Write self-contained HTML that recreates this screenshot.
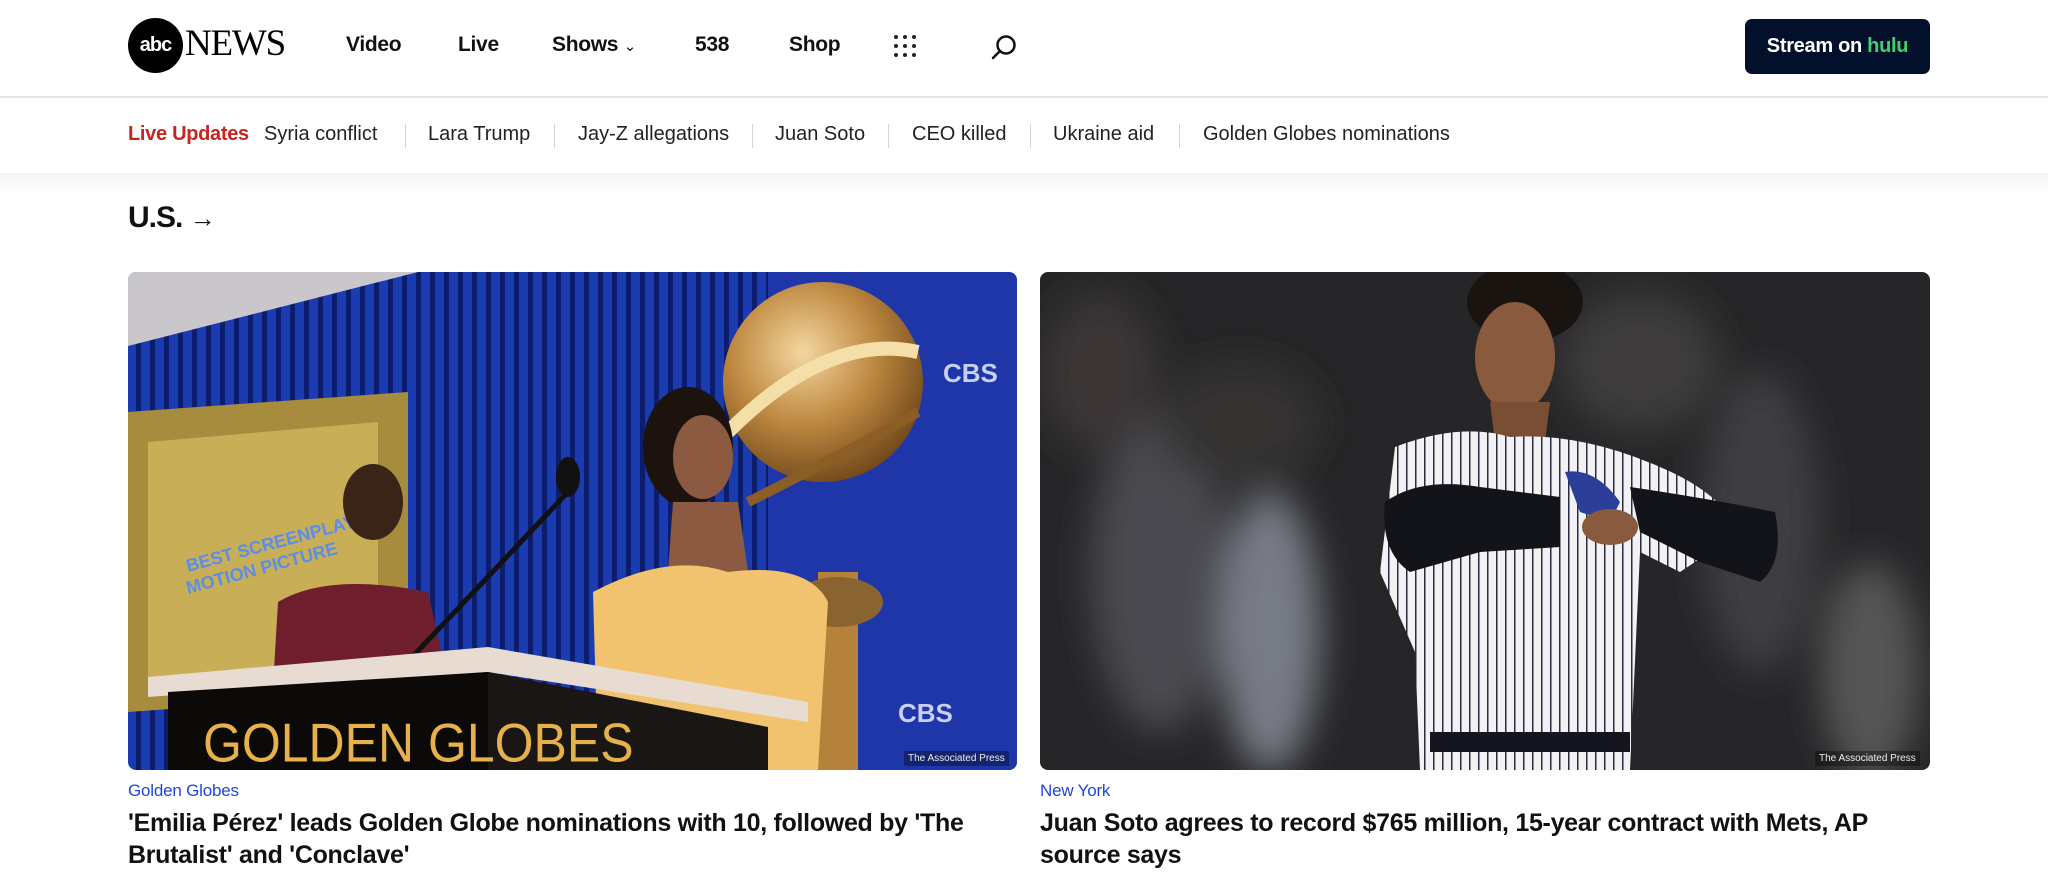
<!DOCTYPE html>
<html><head><meta charset="utf-8"><style>
*{margin:0;padding:0;box-sizing:border-box}
body{width:2048px;height:890px;background:#fff;font-family:"Liberation Sans",Arial,sans-serif;color:#111;position:relative;overflow:hidden}
.a{position:absolute}
.nav{font-weight:700;font-size:21px;top:33px;letter-spacing:-0.3px}
.tr{font-size:20px;top:123px;color:#222;letter-spacing:0}
.sep{top:124px;width:1px;height:24px;background:#d6d6d6}
.cat{font-size:17px;color:#1f45e0;top:781px;letter-spacing:-0.2px}
.hl{font-size:25px;font-weight:700;top:807px;line-height:32px;letter-spacing:-0.3px;width:900px}
.ap{font-size:10px;color:#eee;background:rgba(0,0,0,.35);padding:2px 4px}
</style></head><body>
<div class="a" style="left:128px;top:18px;width:55px;height:55px;border-radius:50%;background:#000;color:#fff;font-weight:700;font-size:20px;line-height:55px;text-align:center;letter-spacing:-1px">abc</div>
<div class="a" style="left:185px;top:22px;font-family:'Liberation Serif',serif;font-size:37px;letter-spacing:-1.2px;color:#000">NEWS</div>
<div class="a nav" style="left:346px">Video</div>
<div class="a nav" style="left:458px">Live</div>
<div class="a nav" style="left:552px">Shows <span style="font-weight:400;font-size:15px">&#8964;</span></div>
<div class="a nav" style="left:695px">538</div>
<div class="a nav" style="left:789px">Shop</div>
<svg class="a" style="left:893px;top:34px" width="26" height="26"><g fill="#222"><circle cx="3" cy="3" r="2"/><circle cx="12" cy="3" r="2"/><circle cx="21" cy="3" r="2"/><circle cx="3" cy="12" r="2"/><circle cx="12" cy="12" r="2"/><circle cx="21" cy="12" r="2"/><circle cx="3" cy="21" r="2"/><circle cx="12" cy="21" r="2"/><circle cx="21" cy="21" r="2"/></g></svg>
<svg class="a" style="left:990px;top:33px" width="28" height="28"><circle cx="16" cy="12" r="8.5" fill="none" stroke="#111" stroke-width="2.5"/><line x1="10" y1="18" x2="3" y2="25" stroke="#111" stroke-width="2.5" stroke-linecap="round"/></svg>
<div class="a" style="left:1745px;top:19px;width:185px;height:55px;background:#03102b;border-radius:7px;color:#fff;font-weight:700;font-size:20px;line-height:55px;text-align:center;letter-spacing:-0.3px">Stream on <span style="color:#3fd16a">hulu</span></div>
<div class="a" style="left:0;top:96px;width:2048px;height:2px;background:#e6e6e6"></div>
<div class="a tr" style="left:128px;color:#c7251e;font-weight:700;letter-spacing:-0.3px">Live Updates</div>
<div class="a tr" style="left:264px">Syria conflict</div>
<div class="a sep" style="left:405px"></div>
<div class="a tr" style="left:428px">Lara Trump</div>
<div class="a sep" style="left:554px"></div>
<div class="a tr" style="left:578px">Jay-Z allegations</div>
<div class="a sep" style="left:752px"></div>
<div class="a tr" style="left:775px">Juan Soto</div>
<div class="a sep" style="left:888px"></div>
<div class="a tr" style="left:912px">CEO killed</div>
<div class="a sep" style="left:1030px"></div>
<div class="a tr" style="left:1053px">Ukraine aid</div>
<div class="a sep" style="left:1179px"></div>
<div class="a tr" style="left:1203px">Golden Globes nominations</div>
<div class="a" style="left:0;top:173px;width:2048px;height:22px;background:linear-gradient(#f4f4f4,#fff)"></div>
<div class="a" style="left:128px;top:201px;font-size:30px;font-weight:700;letter-spacing:-1px">U.S. <span style="font-weight:400;font-size:26px">&rarr;</span></div>

<svg class="a" style="left:128px;top:272px;border-radius:8px" width="889" height="498" viewBox="0 0 889 498">
<defs>
<pattern id="cur" width="14" height="498" patternUnits="userSpaceOnUse"><rect width="14" height="498" fill="#1b3bb0"/><rect x="8" width="5" height="498" fill="#0c1d6e"/></pattern>
<radialGradient id="gl" cx="0.4" cy="0.35" r="0.7"><stop offset="0" stop-color="#f3d7a0"/><stop offset="0.5" stop-color="#c08a42"/><stop offset="1" stop-color="#6d4518"/></radialGradient>
</defs>
<rect width="889" height="498" fill="url(#cur)"/>
<rect x="640" width="249" height="498" fill="#1f36a8"/>
<polygon points="0,0 290,0 0,74" fill="#c9c6cc"/>
<polygon points="0,140 280,120 280,420 0,440" fill="#a88c3e"/>
<polygon points="20,170 250,150 250,400 20,420" fill="#c9ae58"/>
<text x="60" y="300" fill="#5a8ee8" font-size="18" font-weight="700" transform="rotate(-15 60 300)">BEST SCREENPLAY</text>
<text x="60" y="322" fill="#5a8ee8" font-size="18" font-weight="700" transform="rotate(-15 60 322)">MOTION PICTURE</text>
<ellipse cx="245" cy="230" rx="30" ry="38" fill="#3a2418"/>
<path d="M150 330 Q200 300 300 320 L340 498 L140 498 Z" fill="#6e1e2c"/>
<rect x="690" y="300" width="40" height="198" fill="#b5823c"/>
<ellipse cx="710" cy="330" rx="45" ry="25" fill="#8a6430"/>
<circle cx="695" cy="110" r="100" fill="url(#gl)"/>
<path d="M600 160 Q700 60 790 80" stroke="#f5dfa8" stroke-width="14" fill="none"/>
<path d="M620 230 Q720 180 790 140" stroke="#8a5e24" stroke-width="10" fill="none"/>
<text x="815" y="110" fill="#c8d0f0" font-size="26" font-weight="700">CBS</text>
<text x="770" y="450" fill="#c8d0f0" font-size="26" font-weight="700">CBS</text>
<ellipse cx="560" cy="175" rx="45" ry="60" fill="#1c120e"/>
<ellipse cx="575" cy="185" rx="30" ry="42" fill="#8b5a40"/>
<path d="M545 230 L610 230 L620 300 L540 300 Z" fill="#8b5a40"/>
<path d="M465 320 Q540 280 600 300 Q680 290 700 330 L690 498 L470 498 Z" fill="#f1c36e"/>
<line x1="440" y1="220" x2="270" y2="400" stroke="#111" stroke-width="5"/>
<ellipse cx="440" cy="205" rx="12" ry="20" fill="#111"/>
<polygon points="20,405 360,375 680,430 680,450 360,400 20,425" fill="#e8dcd2"/>
<polygon points="40,420 360,400 360,498 40,498" fill="#0b0a08"/>
<polygon points="360,400 640,455 640,498 360,498" fill="#1a1614"/>
<text x="75" y="490" fill="#e6b04a" font-size="50" font-family="Liberation Sans Narrow,Liberation Sans,sans-serif" transform="scale(1,1.1) translate(0,-45)">GOLDEN GLOBES</text>
</svg>
<div class="a ap" style="left:904px;top:751px">The Associated Press</div>

<svg class="a" style="left:1040px;top:272px;border-radius:8px" width="890" height="498" viewBox="0 0 890 498">
<defs><filter id="b"><feGaussianBlur stdDeviation="18"/></filter></defs>
<rect width="890" height="498" fill="#262628"/>
<g filter="url(#b)">
<ellipse cx="120" cy="300" rx="70" ry="160" fill="#4a4a50"/>
<ellipse cx="230" cy="360" rx="50" ry="140" fill="#777b85"/>
<ellipse cx="720" cy="250" rx="60" ry="150" fill="#3c3c42"/>
<ellipse cx="830" cy="400" rx="50" ry="110" fill="#555"/>
<ellipse cx="60" cy="100" rx="60" ry="80" fill="#3a3436"/>
<ellipse cx="600" cy="90" rx="80" ry="70" fill="#3e3a3a"/>
<ellipse cx="200" cy="150" rx="80" ry="60" fill="#353030"/>
</g>
<ellipse cx="485" cy="30" rx="58" ry="40" fill="#1a1410"/>
<ellipse cx="475" cy="85" rx="40" ry="55" fill="#8a5a3e"/>
<path d="M450 130 L510 130 L505 170 L455 170 Z" fill="#7a4e34"/>
<defs><pattern id="ps" width="9" height="10" patternUnits="userSpaceOnUse"><rect width="9" height="10" fill="#f2f2f4"/><rect x="6" width="1.5" height="10" fill="#2a2a40"/></pattern></defs>
<path d="M355 175 Q420 150 470 165 Q540 160 620 195 Q680 220 700 260 L640 300 L600 280 L590 498 L380 498 L375 380 L340 300 Z" fill="url(#ps)"/>
<path d="M345 230 Q380 205 440 215 L520 225 L520 275 L440 280 L370 300 Q340 280 345 230 Z" fill="#13131a"/>
<path d="M590 215 Q660 225 735 240 Q745 290 720 310 L660 290 L600 260 Z" fill="#13131a"/>
<path d="M525 200 Q555 195 580 230 L570 250 L540 240 Z" fill="#2b3f9a"/>
<ellipse cx="570" cy="255" rx="28" ry="18" fill="#8a5a3e"/>
<rect x="390" y="460" width="200" height="20" fill="#151520"/>
</svg>
<div class="a ap" style="left:1815px;top:751px">The Associated Press</div>

<div class="a cat" style="left:128px">Golden Globes</div>
<div class="a hl" style="left:128px">'Emilia Pérez' leads Golden Globe nominations with 10, followed by 'The Brutalist' and 'Conclave'</div>
<div class="a cat" style="left:1040px">New York</div>
<div class="a hl" style="left:1040px">Juan Soto agrees to record $765 million, 15-year contract with Mets, AP source says</div>
</body></html>
